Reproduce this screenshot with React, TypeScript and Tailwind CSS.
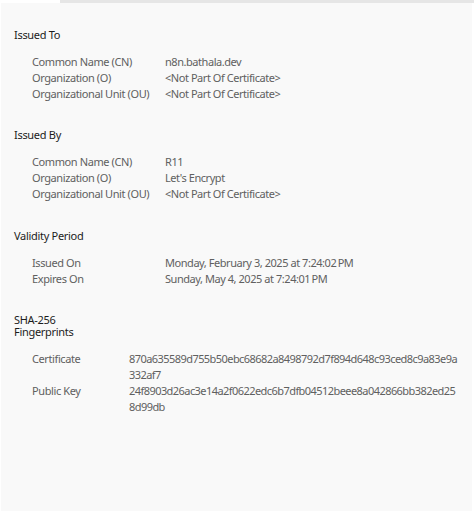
const issuedTo = [
  ['Common Name (CN)', 'n8n.bathala.dev'],
  ['Organization (O)', '<Not Part Of Certificate>'],
  ['Organizational Unit (OU)', '<Not Part Of Certificate>'],
];

const issuedBy = [
  ['Common Name (CN)', 'R11'],
  ['Organization (O)', "Let's Encrypt"],
  ['Organizational Unit (OU)', '<Not Part Of Certificate>'],
];

const validity = [
  ['Issued On', 'Monday, February 3, 2025 at 7:24:02\u2009PM'],
  ['Expires On', 'Sunday, May 4, 2025 at 7:24:01\u2009PM'],
];

// hashes wrap after 58 chars in the original dialog
const fingerprints = [
  ['Certificate', '870a635589d755b50ebc68682a8498792d7f894d648c93ced8c9a83e9a', '332af7'],
  ['Public Key', '24f8903d26ac3e14a2f0622edc6b7dfb04512beee8a042866bb382ed25', '8d99db'],
];

function Rows({ rows, labelWidth, mono }: { rows: string[][]; labelWidth: string; mono?: boolean }) {
  return (
    <div className={mono ? 'mt-[13px] pl-[18px]' : 'mt-[11px] pl-[18px]'}>
      {rows.map(([label, ...lines]) => (
        <div key={label} className="flex leading-[16px] text-[#606060]">
          <div className={`${labelWidth} shrink-0 tracking-[-0.4px]`}>{label}</div>
          <div className={mono ? 'tracking-[-0.56px] whitespace-nowrap' : 'tracking-[-0.45px] whitespace-nowrap'}>
            {lines.map((l) => (
              <div key={l}>{l}</div>
            ))}
          </div>
        </div>
      ))}
    </div>
  );
}

export default function App() {
  return (
    <div className="h-[514px] w-[474px] bg-white font-['Noto_Sans',sans-serif] text-[11px]">
      <div className="flex h-[3px]">
        <div className="w-[60px] bg-white" />
        <div className="flex-1 bg-[#e6e6e6]" />
      </div>
      <div className="ml-[1px] mr-[2px] h-[508px] bg-[#f9f9f9] px-[13px] pt-[24px]">
        <section>
          <h2 className="leading-[16px] tracking-[-0.3px] text-[#1c1c1c]">Issued To</h2>
          <Rows rows={issuedTo} labelWidth="w-[133px]" />
        </section>
        <section className="mt-[25px]">
          <h2 className="leading-[16px] tracking-[-0.3px] text-[#1c1c1c]">Issued By</h2>
          <Rows rows={issuedBy} labelWidth="w-[133px]" />
        </section>
        <section className="mt-[26px]">
          <h2 className="leading-[16px] tracking-[-0.3px] text-[#1c1c1c]">Validity Period</h2>
          <Rows rows={validity} labelWidth="w-[133px]" />
        </section>
        <section className="mt-[27px]">
          <h2 className="leading-[12px] tracking-[-0.3px] text-[#1c1c1c]">
            SHA-256
            <br />
            Fingerprints
          </h2>
          <Rows rows={fingerprints} labelWidth="w-[97px]" mono />
        </section>
      </div>
    </div>
  );
}
